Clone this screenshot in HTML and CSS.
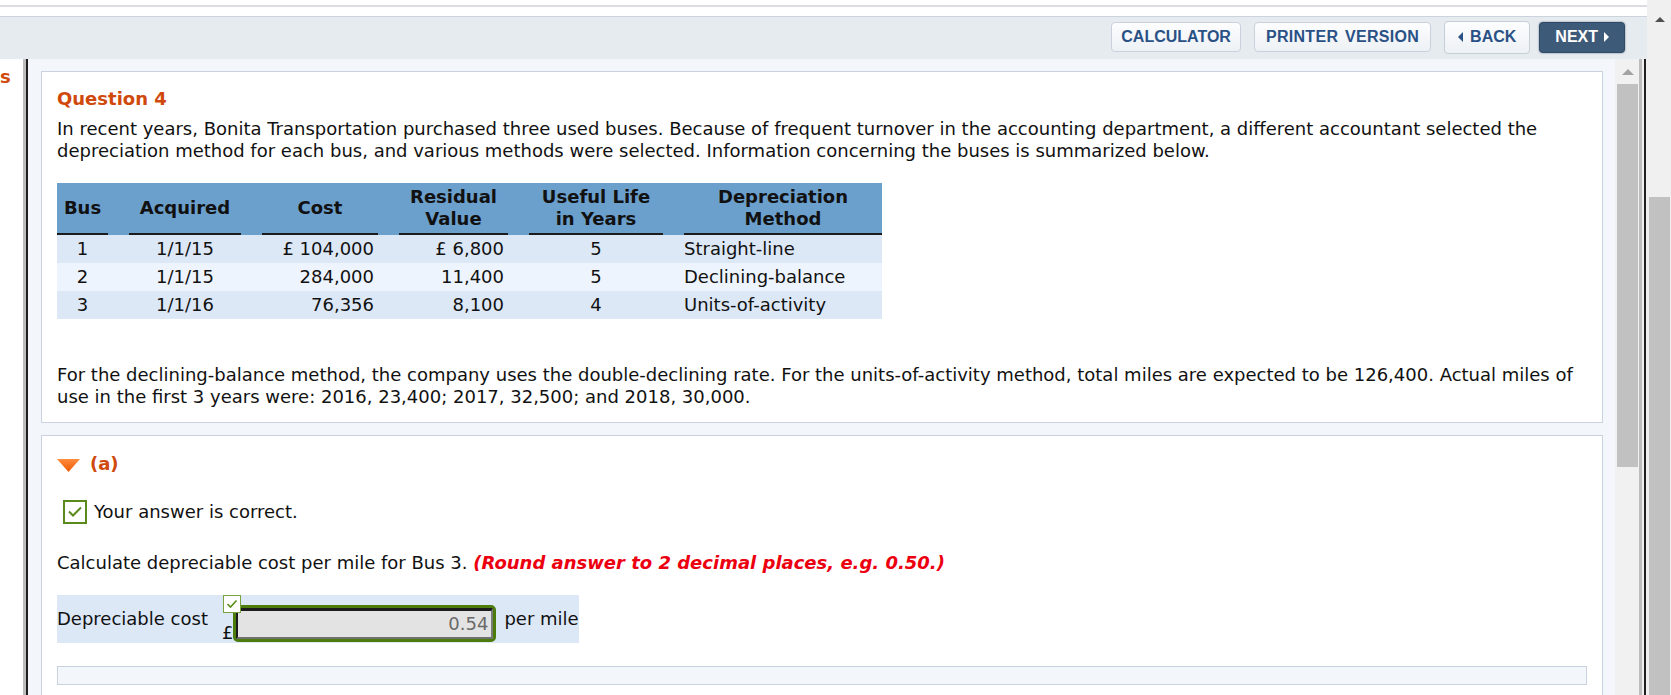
FILE: index.html
```html
<!DOCTYPE html>
<html lang="en">
<head>
    <meta charset="UTF-8">
    <meta name="viewport" content="width=device-width, initial-scale=1.0">
    <title>Question 4</title>
    <link rel="stylesheet" href="styles.css">
</head>
<body>
<div class="page">
    <div class="main">
        <div class="topline"></div>
        <div class="toolbar">
            <button class="btn">CALCULATOR</button>
            <button class="btn btn-wide">PRINTER VERSION</button>
            <button class="btn btn-back"><span class="tri tri-left"></span>BACK</button>
            <button class="btn btn-next">NEXT<span class="tri tri-right"></span></button>
        </div>

        <div class="work">
            <div class="side"><span>s</span></div>
            <div class="frame">
                <div class="frame-in">
                    <div class="content">
                        <div class="card">
                            <h2 class="q-title">Question 4</h2>
                            <p class="intro">In recent years, Bonita Transportation purchased three used buses. Because of frequent turnover in the accounting department, a different accountant selected the depreciation method for each bus, and various methods were selected. Information concerning the buses is summarized below.</p>

                            <table class="buses">
                                <colgroup>
                                    <col class="c-bus">
                                    <col class="c-acq">
                                    <col class="c-cost">
                                    <col class="c-res">
                                    <col class="c-life">
                                    <col class="c-method">
                                </colgroup>
                                <thead>
                                    <tr>
                                        <th class="first">Bus</th>
                                        <th>Acquired</th>
                                        <th>Cost</th>
                                        <th>Residual<br>Value</th>
                                        <th>Useful Life<br>in Years</th>
                                        <th class="last">Depreciation<br>Method</th>
                                    </tr>
                                </thead>
                                <tbody>
                                    <tr>
                                        <td class="first center">1</td>
                                        <td class="center">1/1/15</td>
                                        <td class="num">£ 104,000</td>
                                        <td class="num">£ 6,800</td>
                                        <td class="center">5</td>
                                        <td class="last">Straight-line</td>
                                    </tr>
                                    <tr>
                                        <td class="first center">2</td>
                                        <td class="center">1/1/15</td>
                                        <td class="num">284,000</td>
                                        <td class="num">11,400</td>
                                        <td class="center">5</td>
                                        <td class="last">Declining-balance</td>
                                    </tr>
                                    <tr>
                                        <td class="first center">3</td>
                                        <td class="center">1/1/16</td>
                                        <td class="num">76,356</td>
                                        <td class="num">8,100</td>
                                        <td class="center">4</td>
                                        <td class="last">Units-of-activity</td>
                                    </tr>
                                </tbody>
                            </table>

                            <p class="note">For the declining-balance method, the company uses the double-declining rate. For the units-of-activity method, total miles are expected to be 126,400. Actual miles of use in the first 3 years were: 2016, 23,400; 2017, 32,500; and 2018, 30,000.</p>
                        </div>

                        <div class="card part">
                            <div class="part-head">
                                <svg class="caret" width="23" height="13" viewBox="0 0 23 13">
                                    <defs>
                                        <linearGradient id="caretFill" x1="0" y1="0" x2="0" y2="1">
                                            <stop offset="0" stop-color="#ff8d40"/>
                                            <stop offset="1" stop-color="#ee5800"/>
                                        </linearGradient>
                                    </defs>
                                    <polygon points="0,0 23,0 11.5,13" fill="url(#caretFill)"/>
                                </svg>
                                <span>(a)</span>
                            </div>

                            <div class="result">
                                <span class="check-box">
                                    <svg width="20" height="20" viewBox="0 0 20 20"><polyline points="4,9.5 8,13.5 16,5.5" fill="none" stroke="#5a8a1c" stroke-width="2"/></svg>
                                </span>
                                Your answer is correct.
                            </div>

                            <p class="prompt">Calculate depreciable cost per mile for Bus 3. <em class="hint">(Round answer to 2 decimal places, e.g. 0.50.)</em></p>

                            <div class="answer">
                                <span class="answer-label">Depreciable cost</span>
                                <span class="field">
                                    <span class="badge">
                                        <svg width="16" height="16" viewBox="0 0 16 16"><polyline points="3.5,8 6.5,11 12.5,4.5" fill="none" stroke="#5a8a1c" stroke-width="1.6"/></svg>
                                    </span>
                                    <span class="cur">£</span>
                                    <span class="input-wrap"><input type="text" value="0.54" readonly></span>
                                </span>
                                <span class="unit">per mile</span>
                            </div>

                            <div class="empty-box"></div>
                        </div>
                    </div>
                    <div class="vscroll">
                        <span class="arrow-up"></span>
                        <span class="thumb"></span>
                    </div>
                    <div class="vedge"></div>
                </div>
            </div>
        </div>
    </div>

    <div class="page-scroll">
        <span class="arrow-up dark"></span>
        <span class="thumb"></span>
    </div>
</div>
</body>
</html>
```

FILE: styles.css
```css
html, body {
    margin: 0;
    padding: 0;
    height: 100%;
    overflow: hidden;
}

* {
    box-sizing: border-box;
}

body {
    font-family: "DejaVu Sans", Verdana, sans-serif;
    font-size: 18px;
    line-height: 22px;
    color: #111;
    background: #fff;
}

.page {
    display: flex;
    height: 100vh;
}

.main {
    flex: 1;
    display: flex;
    flex-direction: column;
    min-width: 0;
}

/* top strip + toolbar */

.topline {
    height: 7px;
    border-bottom: 2px solid #dcdce1;
    margin-bottom: 9px;
    flex: none;
}

.toolbar {
    flex: none;
    height: 43px;
    display: flex;
    justify-content: flex-end;
    align-items: center;
    padding: 0 22px 2px 0;
    border-top: 1px solid #cbd3dd;
    background: #e6ebf0;
}

.btn {
    font: bold 16px "Liberation Sans", Arial, sans-serif;
    color: #2a5185;
    height: 30px;
    padding: 0 9px;
    margin-left: 13px;
    border: 1px solid #c9d2dc;
    border-radius: 4px;
    background: linear-gradient(#fdfdfe, #edf1f5);
    display: flex;
    align-items: center;
    cursor: pointer;
}

.btn-wide {
    padding: 0 11px;
    word-spacing: 2px;
    letter-spacing: 0.3px;
}

.btn-back {
    height: 33px;
    padding: 0 13px;
    border-color: #c6ced8;
}

.btn-next {
    height: 31px;
    padding: 0 15px;
    margin-left: 9px;
    color: #fff;
    background: #3d5a79;
    border-color: #2f4a66;
    box-shadow: 0 0 2px rgba(20, 35, 55, 0.6);
}

.tri {
    display: inline-block;
    width: 0;
    height: 0;
    border-top: 5px solid transparent;
    border-bottom: 5px solid transparent;
}

.tri-left {
    border-right: 5px solid #2a5185;
    margin-right: 7px;
}

.tri-right {
    border-left: 5px solid #fff;
    margin-left: 6px;
}

/* work area */

.work {
    flex: 1;
    display: flex;
    min-height: 0;
}

.side {
    flex: none;
    width: 23px;
    padding-top: 7px;
    color: #d0490c;
    font-weight: bold;
}

.frame {
    flex: 1;
    display: flex;
    min-width: 0;
    border-left: 3px solid #bdbdbd;
    border-right: 1px solid #f0f0f0;
}

.frame-in {
    flex: 1;
    display: flex;
    min-width: 0;
    border-left: 2px solid #1f1f1f;
    border-right: 2px solid #1f1f1f;
}

.content {
    flex: 1;
    min-width: 0;
    overflow: hidden;
    background: #f3f6fa;
    padding: 12px 12px 0 13px;
}

.vscroll {
    flex: none;
    width: 24px;
    background: #f1f1f1;
    display: flex;
    flex-direction: column;
    align-items: center;
    padding: 10px 1px 0 2px;
}

.vedge {
    flex: none;
    width: 5px;
    border-left: 3px solid #bdbdbd;
    background: #f0f0f0;
}

.arrow-up {
    width: 0;
    height: 0;
    border-left: 6px solid transparent;
    border-right: 6px solid transparent;
    border-bottom: 6px solid #a3a3a3;
}

.arrow-up.dark {
    border-left-width: 5px;
    border-right-width: 5px;
    border-bottom: 5px solid #505050;
}

.vscroll .thumb {
    width: 21px;
    height: 383px;
    margin-top: 9px;
    background: #c1c1c1;
}

.page-scroll {
    flex: none;
    width: 24px;
    background: #f0f0f0;
    display: flex;
    flex-direction: column;
    align-items: center;
    padding: 17px 1px 0 2px;
}

.page-scroll .thumb {
    width: 21px;
    flex: 1;
    margin-top: 175px;
    background: #c1c1c1;
}

/* cards */

.card {
    background: #fff;
    border: 1px solid #c9d2de;
    padding: 16px 15px 14px;
    margin-bottom: 12px;
}

.q-title {
    margin: 0;
    font-size: 18px;
    line-height: 22px;
    color: #d0490c;
}

.intro {
    margin: 8px 0 0;
}

.note {
    margin: 45px 0 0;
}

/* data table */

.buses {
    margin-top: 21px;
    border-collapse: collapse;
    table-layout: fixed;
    width: 825px;
}

.c-bus { width: 61px; }
.c-acq { width: 133px; }
.c-cost { width: 137px; }
.c-res { width: 130px; }
.c-life { width: 155px; }
.c-method { width: 209px; }

.buses th {
    padding: 3px 10px 5px 11px;
    line-height: 22px;
    font-weight: bold;
    text-align: center;
    vertical-align: middle;
    background-color: #6b9fcc;
    background-image: linear-gradient(#1c1c1c, #1c1c1c);
    background-repeat: no-repeat;
    background-size: calc(100% - 21px) 2px;
    background-position: 11px 100%;
}

.buses th.first {
    padding-left: 0;
    background-size: calc(100% - 10px) 2px;
    background-position: 0 100%;
}

.buses th.last {
    padding-right: 0;
    background-size: calc(100% - 11px) 2px;
}

.buses td {
    padding: 0 10px 0 11px;
    line-height: 28px;
    white-space: nowrap;
}

.buses td.first {
    padding-left: 0;
}

.buses td.last {
    padding-right: 0;
}

.buses td.center {
    text-align: center;
}

.buses td.num {
    text-align: right;
    padding-right: 14px;
}

.buses tbody tr:nth-child(odd) {
    background: #dde8f7;
}

.buses tbody tr:nth-child(even) {
    background: #eef4fd;
}

/* part (a) */

.part {
    padding-top: 17px;
}

.part-head {
    display: flex;
    align-items: center;
    gap: 10px;
    color: #d0490c;
    font-weight: bold;
}

.caret {
    display: block;
    margin-top: 2px;
}

.result {
    margin: 25px 0 0 6px;
    display: flex;
    align-items: center;
    gap: 7px;
    line-height: 24px;
}

.check-box {
    width: 24px;
    height: 24px;
    border: 2px solid #5a8a1c;
    background: #fff;
    display: flex;
}

.prompt {
    margin: 28px 0 0;
}

.hint {
    color: #ec0010;
    font-weight: bold;
    font-style: italic;
}

.answer {
    margin-top: 21px;
    width: 522px;
    height: 48px;
    background: #dde8f7;
    display: flex;
    align-items: center;
}

.answer-label {
    margin-right: 14px;
}

.field {
    position: relative;
    align-self: flex-end;
    margin-bottom: 1px;
    display: flex;
    align-items: flex-end;
}

.badge {
    position: absolute;
    left: 1px;
    top: -10px;
    width: 18px;
    height: 18px;
    border: 1px solid #77a23e;
    background: #fff;
    display: flex;
}

.cur {
    line-height: 18px;
}

.input-wrap {
    width: 263px;
    height: 37px;
    border: 3px solid #4c7d0c;
    border-radius: 5px;
    display: flex;
}

.input-wrap input {
    width: 100%;
    margin: 0;
    font: inherit;
    color: #6a6a6a;
    text-align: right;
    padding: 0 3px 0 4px;
    background: #e3e3e3;
    border-style: solid;
    border-width: 3px 2px 2px 2px;
    border-color: #1c1c1c #7a7a7a #707070 #1c1c1c;
}

.unit {
    margin-left: 8px;
}

.empty-box {
    margin-top: 23px;
    height: 19px;
    background: #f3f6fa;
    border: 1px solid #c9d2de;
}
```
